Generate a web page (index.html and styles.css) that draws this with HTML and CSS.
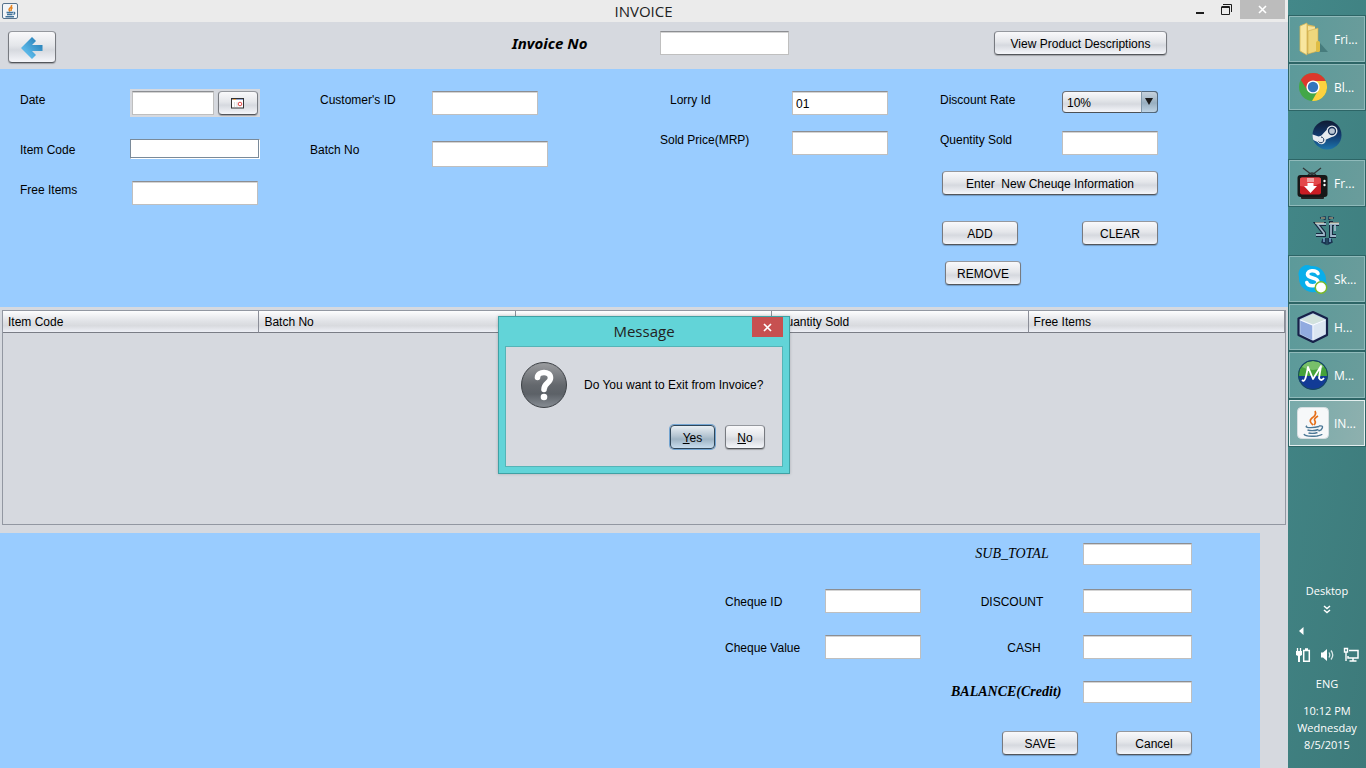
FILE: index.html
```html
<!DOCTYPE html>
<html lang="en">
<head>
  <meta charset="UTF-8">
  <meta name="viewport" content="width=device-width, initial-scale=1.0">
  <title>INVOICE</title>
  <link rel="stylesheet" href="styles.css">
</head>
<body>
  <main class="window">
    <header class="titlebar">
      <svg class="java-small" width="16" height="16" viewBox="0 0 16 16">
        <rect x="0.5" y="0.5" width="15" height="15" rx="1.5" fill="#f2f5f8" stroke="#56728c"/>
        <path d="M9.5 2Q10 4 7.8 5.2Q6.2 6.6 8 8.4M10.5 4.5Q8.5 6 9.2 8" fill="none" stroke="#e5821e" stroke-width="1.5"/>
        <path d="M4.5 9.5H11M5 11.5H10.5M3.5 13.7H12M11.5 9.3Q14 9.5 11.5 11.6" fill="none" stroke="#42739a" stroke-width="1.4"/>
      </svg>
      <h1>INVOICE</h1>
      <div class="window-buttons">
        <button class="win-btn" aria-label="Minimize">
          <svg width="10" height="12" viewBox="0 0 10 12"><path d="M0 9H8" stroke="#1d1d1d" stroke-width="2"/></svg>
        </button>
        <button class="win-btn" aria-label="Restore">
          <svg width="12" height="12" viewBox="0 0 12 12"><path d="M0.500 3V10.500H8.500V2.500H0.500M0 3.500H9M2 0.500H10.500V8" fill="none" stroke="#1d1d1d"/></svg>
        </button>
        <button class="win-btn win-close" aria-label="Close">
          <svg width="9" height="9" viewBox="0 0 9 9"><path d="M1 1L8 8M8 1L1 8" stroke="#fff" stroke-width="1.6"/></svg>
        </button>
      </div>
    </header>

    <section class="toolbar">
      <button class="btn back" aria-label="Back">
        <svg width="24" height="24" viewBox="0 0 24 24">
          <defs>
            <linearGradient id="arrow" x1="0" y1="1" x2="1" y2="0">
              <stop offset="0.3" stop-color="#58b5e6"/>
              <stop offset="1" stop-color="#1c74ad"/>
            </linearGradient>
          </defs>
          <path d="M1 12L12 1L16 5L12 9H22.5V15H12L16 19L12 23Z" fill="url(#arrow)"/>
        </svg>
      </button>
      <label class="invoice-label" for="invoiceNo">Invoice No</label>
      <input class="field invoice-no" type="text" id="invoiceNo">
      <button class="btn view">View Product Descriptions</button>
    </section>

    <form class="entry" onsubmit="return false">
      <div class="col">
        <div class="row tall">
          <label for="date">Date</label>
          <div class="date-picker">
            <input class="field" type="text" id="date">
            <button class="btn" type="button" aria-label="Pick a date">
              <svg width="14" height="11" viewBox="0 0 14 11">
                <rect x="0.5" y="0.5" width="12" height="9.5" fill="#fff" stroke="#333"/>
                <path d="M1 1.5H12" stroke="#94a5cf"/>
                <path d="M2 1.5H5" stroke="#eda34b"/>
                <path d="M3.5 4V9M6 4V9" stroke="#ddd"/>
                <circle cx="9" cy="6" r="1.8" fill="none" stroke="#e24848"/>
              </svg>
            </button>
          </div>
        </div>
        <div class="row">
          <label for="itemCode">Item Code</label>
          <input class="combo" type="text" id="itemCode">
        </div>
        <div class="row free-row">
          <label for="freeItems">Free Items</label>
          <input class="field free" type="text" id="freeItems">
        </div>
      </div>

      <div class="col">
        <div class="row tall">
          <label class="wide indent" for="customer">Customer's ID</label>
          <input class="field customer" type="text" id="customer">
        </div>
        <div class="row">
          <label class="wide" for="batch">Batch No</label>
          <input class="field batch" type="text" id="batch">
        </div>
      </div>

      <div class="col">
        <div class="row">
          <label class="wider indent" for="lorry">Lorry Id</label>
          <input class="field" type="text" id="lorry" value="01">
        </div>
        <div class="row">
          <label class="wider" for="price">Sold Price(MRP)</label>
          <input class="field" type="text" id="price">
        </div>
      </div>

      <div class="col">
        <div class="row">
          <label class="wide" for="rate">Discount Rate</label>
          <div class="select">
            <select id="rate"><option>10%</option></select>
          </div>
        </div>
        <div class="row">
          <label class="wide" for="quantity">Quentity Sold</label>
          <input class="field" type="text" id="quantity">
        </div>
        <div class="row tall actions">
          <button class="btn cheque" type="button">Enter&nbsp; New Cheuqe Information</button>
        </div>
        <div class="row actions">
          <button class="btn" type="button">ADD</button>
          <button class="btn" type="button">CLEAR</button>
        </div>
        <div class="row actions remove">
          <button class="btn" type="button">REMOVE</button>
        </div>
      </div>
    </form>

    <section class="items">
      <table>
        <thead>
          <tr>
            <th>Item Code</th>
            <th>Batch No</th>
            <th></th>
            <th>Quantity Sold</th>
            <th>Free Items</th>
          </tr>
        </thead>
      </table>
    </section>

    <form class="totals" onsubmit="return false">
      <div class="cheques">
        <label for="chequeId">Cheque ID</label>
        <input class="field" type="text" id="chequeId">
        <label for="chequeValue">Cheque Value</label>
        <input class="field" type="text" id="chequeValue">
      </div>
      <div class="sums">
        <label class="serif" for="subTotal">SUB_TOTAL</label>
        <input class="field short" type="text" id="subTotal">
        <label for="discount">DISCOUNT</label>
        <input class="field" type="text" id="discount">
        <label class="cash" for="cash">CASH</label>
        <input class="field" type="text" id="cash">
        <label class="serif balance" for="balance">BALANCE(Credit)</label>
        <input class="field short" type="text" id="balance">
        <div class="save-row">
          <button class="btn" type="button">SAVE</button>
          <button class="btn" type="button">Cancel</button>
        </div>
      </div>
    </form>

    <div class="dialog" role="dialog" aria-labelledby="dialogTitle">
      <h2 id="dialogTitle">Message</h2>
      <button class="dialog-close" aria-label="Close">
        <svg width="9" height="9" viewBox="0 0 9 9"><path d="M1 1L8 8M8 1L1 8" stroke="#fff" stroke-width="1.7"/></svg>
      </button>
      <div class="dialog-body">
        <div class="question">
          <svg width="46" height="46" viewBox="0 0 46 46">
            <defs>
              <linearGradient id="ball" x1="0" y1="0" x2="0" y2="1">
                <stop offset="0" stop-color="#9b9da0"/>
                <stop offset="0.5" stop-color="#64686d"/>
                <stop offset="0.7" stop-color="#5c6167"/>
                <stop offset="1" stop-color="#878d94"/>
              </linearGradient>
            </defs>
            <circle cx="23" cy="23" r="22.5" fill="url(#ball)" stroke="#3c4045"/>
            <path d="M16.5 15.5C16.5 9 29.5 8.500 29.500 16C29.500 21 23 21 23 27.500" fill="none" stroke="#fff" stroke-width="5.6" stroke-linecap="round"/>
            <circle cx="23" cy="35" r="3.3" fill="#fff"/>
          </svg>
          <p>Do You want to Exit from Invoice?</p>
        </div>
        <div class="answers">
          <button class="btn yes"><u>Y</u>es</button>
          <button class="btn no"><u>N</u>o</button>
        </div>
      </div>
    </div>
  </main>

  <aside class="taskbar">
    <nav class="tasks">
      <button class="task">
        <svg width="32" height="34" viewBox="0 0 32 34">
          <path d="M20 30L31 30L23 21Z" fill="#2c5d5f" opacity="0.5"/>
          <path d="M9 2L18 4V30L10 31Z" fill="#d9b95a"/>
          <path d="M11 4L18 5V29L11 30Z" fill="#f5e29a"/>
          <path d="M3 4L10 1V33L3 29Z" fill="#f8e69f" stroke="#d5b656" stroke-width="0.8"/>
          <path d="M11 9L21 6V29L11 32Z" fill="#efd77d" stroke="#cda94c" stroke-width="0.6"/>
          <rect x="19" y="19" width="4" height="11" rx="1.5" fill="#dfbd45"/>
        </svg>
        <span>Fri...</span>
      </button>
      <button class="task">
        <svg width="32" height="32" viewBox="0 0 32 32">
          <circle cx="16" cy="16" r="14" fill="#43a747"/>
          <path d="M16 16L3.900 9A14 14 0 0 1 28.600 10H16Z" fill="#dc382d"/>
          <path d="M16 10H28.700A14 14 0 0 1 15 30L21.300 19Z" fill="#fdd23f"/>
          <path d="M3.900 9L10.500 19.500L16 10Z" fill="#dc382d"/>
          <circle cx="16" cy="16" r="6.600" fill="#fff"/>
          <circle cx="16" cy="16" r="5.200" fill="#3475bd"/>
        </svg>
        <span>Bl...</span>
      </button>
      <button class="task bare" aria-label="Steam">
        <svg width="32" height="32" viewBox="0 0 32 32">
          <defs>
            <linearGradient id="steam" x1="0" y1="0" x2="0" y2="1">
              <stop offset="0" stop-color="#101b33"/>
              <stop offset="0.5" stop-color="#12396d"/>
              <stop offset="1" stop-color="#1c73ab"/>
            </linearGradient>
            <clipPath id="steamClip"><circle cx="16" cy="16" r="14.5"/></clipPath>
          </defs>
          <circle cx="16" cy="16" r="14.5" fill="url(#steam)"/>
          <g clip-path="url(#steamClip)">
            <path d="M0 15L9 18L15.5 11L23 17L14 21L11 25L0 20Z" fill="#e6ebf0"/>
            <circle cx="21" cy="12" r="5.5" fill="#e6ebf0"/>
            <circle cx="21" cy="12" r="3.5" fill="#b9c4d2" stroke="#173158" stroke-width="1.3"/>
            <circle cx="10.500" cy="21" r="4.300" fill="#e6ebf0"/>
            <path d="M7.500 22.500A2.900 2.900 0 1 0 10 18" fill="none" stroke="#173158"/>
          </g>
        </svg>
      </button>
      <button class="task">
        <svg width="32" height="34" viewBox="0 0 32 34">
          <path d="M6 2L15 9L24 2M11 9Q15 5 19 9" fill="none" stroke="#303536" stroke-width="1.3"/>
          <rect x="4" y="29" width="23" height="4" rx="1" fill="#222"/>
          <rect x="0.5" y="9" width="30" height="22" rx="3" fill="#171717"/>
          <rect x="3" y="11.5" width="21" height="17" rx="2" fill="#c91d24"/>
          <path d="M3 13Q3 11.5 5 11.5H22Q24 11.5 24 13V17Q14 22 3 20Z" fill="#e4484a"/>
          <path d="M10 13H17M10 15H17" stroke="#fff" stroke-width="1.2"/>
          <path d="M10.5 17H16.5V20H20L13.5 27L7 20H10.5Z" fill="#fff"/>
          <circle cx="27.5" cy="15" r="1.2" fill="#fff"/>
          <circle cx="27.5" cy="19" r="1.2" fill="#fff"/>
        </svg>
        <span>Fr...</span>
      </button>
      <button class="task bare" aria-label="StarCraft">
        <svg width="32" height="32" viewBox="0 0 32 32">
          <path d="M9 3L14 2V5M23 3L18 2V5M12 24L11 27L15 29V23M20 24L21 27L17 29V23" fill="#1b3552" stroke="#1b3552" stroke-width="1.5"/>
          <path d="M15 9H6L13 18V20H5M28 9H18M20 6V21H25" fill="none" stroke="#16283e" stroke-width="4"/>
          <path d="M15 9H6L13 18V20H5" fill="none" stroke="#9db6c8" stroke-width="1.8"/>
          <path d="M28 9H18M20 8V21H25M24 10V16" fill="none" stroke="#9db6c8" stroke-width="1.800"/>
          <path d="M4 8H13M19 8H28" stroke="#efe3bd"/>
          <path d="M10 3H14M18 3H22" stroke="#d8c58c"/>
          <path d="M13 23V27M19 23V27" stroke="#7fb0d6" stroke-width="1.400"/>
        </svg>
      </button>
      <button class="task">
        <svg width="32" height="32" viewBox="0 0 32 32">
          <path d="M10 2A9 9 0 0 0 2 14A14 14 0 0 0 18 29A8.500 8.500 0 0 0 29 18A14 14 0 0 0 14 3A8 8 0 0 0 10 2Z" fill="#08aeea"/>
          <path d="M21 10.500C19 6.500 10 7 10.500 11.500C11 16 21 14 21 19C21 24 11 24 9.800 19.500" fill="none" stroke="#fff" stroke-width="3.600" stroke-linecap="round"/>
          <circle cx="24" cy="24.500" r="5.700" fill="#fff" stroke="#78b829" stroke-width="1.500"/>
        </svg>
        <span>Sk...</span>
      </button>
      <button class="task">
        <svg width="32" height="32" viewBox="0 0 32 32">
          <path d="M16 1L30 7.500V24L16 31L1.500 24V7.500Z" fill="#b9cdea" stroke="#172149" stroke-width="2.200" stroke-linejoin="round"/>
          <path d="M16 3L28 8.500L16 13.500L4 8.500Z" fill="#d2e2dd"/>
          <path d="M3.500 9.500L15.500 14.500V29L3.500 23Z" fill="#91abe0"/>
          <path d="M16.500 14.500L28.500 9.500V23L16.500 29Z" fill="#dbe6f1"/>
          <path d="M3.500 9L16 14L28.500 9M16 14V29" fill="none" stroke="#f8fbff" stroke-width="1.200"/>
        </svg>
        <span>H...</span>
      </button>
      <button class="task">
        <svg width="32" height="32" viewBox="0 0 32 32">
          <circle cx="16" cy="16" r="15" fill="#123b96"/>
          <path d="M1 17A15 15 0 0 1 31 17Z" fill="#45a23a"/>
          <path d="M5 8A13 13 0 0 1 27 8Q16 14 5 8Z" fill="#9bd28a" opacity="0.6"/>
          <path d="M5 21C8 24 9 18 11 8L16 20L24 7L22 19Q24 23 27 19" fill="none" stroke="#fff" stroke-width="1.800" stroke-linejoin="round"/>
          <circle cx="16" cy="16" r="14.500" fill="none" stroke="#184c55"/>
        </svg>
        <span>M...</span>
      </button>
      <button class="task active">
        <svg width="32" height="32" viewBox="0 0 32 32">
          <rect x="0.5" y="0.5" width="31" height="31" rx="4" fill="#f6f8f9" stroke="#d7dfe2"/>
          <path d="M18 4Q20 8 15 11Q11 14 16 18M21 9Q16 12 18 14Q19 16 17 18" fill="none" stroke="#e66f19" stroke-width="1.7"/>
          <path d="M10 19Q8 20 11 20.500Q17 21 22 19.500M10.500 23Q16 24.500 21.500 22.500M11.500 26Q16 27 20.500 25.500M7 27Q8 30 20 29Q25 28 25 27M22 19Q28 18 24 23L21.500 24" fill="none" stroke="#4b7896" stroke-width="1.400"/>
        </svg>
        <span>IN...</span>
      </button>
    </nav>

    <div class="tray">
      <a class="desktop" href="#">Desktop</a>
      <svg class="chevrons" width="8" height="9" viewBox="0 0 8 9"><path d="M1 1L4 3.500L7 1M1 5L4 7.500L7 5" fill="none" stroke="#fff" stroke-width="1.500"/></svg>
      <svg class="more" width="6" height="8" viewBox="0 0 6 8"><path d="M5.500 0V8L1 4Z" fill="#fff"/></svg>
      <div class="status">
        <svg width="16" height="16" viewBox="0 0 16 16">
          <path d="M2.500 1V4M5.500 1V4" stroke="#fff" stroke-width="1.300"/>
          <path d="M1 4H7V8L5 9V15H3V9L1 8Z" fill="#fff"/>
          <path d="M8.700 3.500H14.300V14.300H8.700ZM10 2H13" fill="none" stroke="#fff" stroke-width="1.500"/>
        </svg>
        <svg width="16" height="16" viewBox="0 0 16 16">
          <path d="M2 5.500H4L8 2V14L4 10.500H2Z" fill="#fff"/>
          <path d="M10 5.500Q11.500 8 10 10.500M12 3.500Q15.500 8 12 12.500" fill="none" stroke="#d9e8e8" stroke-width="1.300"/>
        </svg>
        <svg width="16" height="16" viewBox="0 0 16 16">
          <path d="M6 3.500H15V11H5V9M10 11V14M6.500 14H13.500" fill="none" stroke="#fff" stroke-width="1.500"/>
          <path d="M1.500 1.500H4.500V5H1.500ZM3 5V14" fill="none" stroke="#fff" stroke-width="1.400"/>
        </svg>
      </div>
      <div class="language">ENG</div>
      <div class="clock">
        <div>10:12 PM</div>
        <div>Wednesday</div>
        <div>8/5/2015</div>
      </div>
    </div>
  </aside>
</body>
</html>
```
FILE: styles.css
```css
*,
*::before,
*::after {
  margin: 0;
  padding: 0;
  box-sizing: border-box;
}

body {
  min-height: 100vh;
  display: flex;
  background: #d6d9df;
  font-family: "Liberation Sans", Arial, sans-serif;
  font-size: 12px;
  color: #000;
}

button,
input,
select {
  font: inherit;
  color: inherit;
}

svg {
  display: block;
  flex: none;
}

/* window */
.window {
  flex: 1;
  min-width: 0;
  position: relative;
  display: flex;
  flex-direction: column;
}

.titlebar {
  height: 22px;
  padding: 0 3px 0 2px;
  display: grid;
  grid-template-columns: 1fr auto 1fr;
  background: #ebebeb;
}

.java-small {
  margin-top: 3px;
}

.titlebar h1,
.dialog h2 {
  font-family: "Open Sans", sans-serif;
  font-size: 15px;
  font-weight: normal;
  line-height: 22px;
  color: #222;
}

.window-buttons {
  display: flex;
  justify-content: flex-end;
  align-items: flex-start;
}

.win-btn {
  width: 26px;
  height: 19px;
  display: flex;
  align-items: center;
  justify-content: center;
  border: none;
  background: none;
}

.win-close {
  width: 45px;
  background: #bcbcbc;
}

/* shared controls */
.btn {
  height: 24px;
  padding-top: 1px;
  border: 1px solid #777a80;
  border-top-color: #95989e;
  border-bottom-color: #53565b;
  border-radius: 4px;
  background: linear-gradient(#f9f9fb, #e4e6ea 45%, #d6d9df 60%, #f5f6fa);
  box-shadow: 0 1px 1px rgba(0, 0, 0, 0.25);
}

.field {
  width: 96px;
  height: 24px;
  padding: 1px 3px 0;
  border: 1px solid #bfbfbf;
  border-top-color: #8c8e92;
  background: #fff;
  box-shadow: inset 0 1px 0 #d4d4d4;
}

.toolbar {
  height: 47px;
  padding: 9px 121px 0 8px;
  display: flex;
  align-items: flex-start;
}

.back {
  width: 48px;
  height: 32px;
  display: flex;
  align-items: center;
  justify-content: center;
}

.invoice-label {
  margin-left: auto;
  width: 148px;
  font-family: "Noto Sans", sans-serif;
  font-size: 15px;
  font-weight: bold;
  font-style: italic;
  line-height: 24px;
}

.invoice-no {
  width: 129px;
}

.view {
  width: 173px;
  margin-left: 205px;
}

/* entry form */
.entry {
  min-height: 238px;
  padding: 20px 0 0 20px;
  display: grid;
  grid-template-columns: 290fr 350fr 280fr 348fr;
  background: #99ccff;
}

.row {
  height: 40px;
  display: flex;
  align-items: flex-start;
}

.row.tall {
  height: 50px;
}

.row label {
  width: 110px;
  line-height: 22px;
}

.row .wide {
  width: 122px;
}

.row .wider {
  width: 132px;
}

.row .indent {
  padding-left: 10px;
}

.row > .field,
.row > .select,
.row > .btn {
  margin-top: 2px;
}

.date-picker {
  width: 130px;
  height: 28px;
  padding: 2px;
  display: flex;
  justify-content: space-between;
  background: #d6d9df;
}

.date-picker .field {
  width: 82px;
}

.date-picker .btn {
  width: 40px;
  display: flex;
  align-items: center;
  justify-content: center;
}

.combo {
  width: 130px;
  height: 20px;
  border: 1px solid #fff;
  border-top-color: #7a8a99;
  border-left-color: #7a8a99;
  background: #fff;
  box-shadow: inset -1px -1px 0 #7a8a99;
}

.free-row {
  gap: 2px;
}

.free {
  width: 126px;
}

.customer {
  width: 106px;
}

.batch {
  width: 116px;
  height: 26px;
}

.select {
  width: 96px;
  height: 22px;
  position: relative;
}

.select select {
  width: 100%;
  height: 100%;
  padding: 1px 0 0 4px;
  appearance: none;
  border: 1px solid #6d7076;
  border-bottom-color: #4c5055;
  border-radius: 4px;
  background: linear-gradient(#f9f9fb, #e0e3e7 45%, #d6d9df 60%, #f5f6fa);
}

.select::before {
  content: "";
  position: absolute;
  top: 0;
  right: 0;
  width: 17px;
  height: 22px;
  border: 1px solid #52687c;
  border-left-color: #8299ab;
  border-radius: 0 4px 4px 0;
  background: linear-gradient(#c6d2dd, #98afc0 55%, #bfd4e5);
  pointer-events: none;
}

.select::after {
  content: "";
  position: absolute;
  top: 7px;
  right: 5px;
  border: 4px solid transparent;
  border-top: 7px solid #1d1d1d;
  border-bottom: none;
  pointer-events: none;
}

.actions {
  width: 218px;
  padding-left: 2px;
  justify-content: space-between;
}

.actions .btn {
  width: 76px;
}

.actions .cheque {
  width: 216px;
}

.actions.remove {
  padding-left: 5px;
}

/* items table */
.items {
  height: 215px;
  margin: 3px 2px 8px;
  border: 1px solid #9297a1;
}

.items table {
  width: 100%;
  border-collapse: separate;
  border-spacing: 0;
  table-layout: fixed;
}

.items th {
  height: 22px;
  padding-left: 5px;
  border-right: 1px solid #8b8e98;
  border-bottom: 1px solid #7a7d86;
  background: linear-gradient(#fdfdfe, #e0e2e6 50%, #d8dade 70%, #eef0f6);
  font-weight: normal;
  text-align: left;
}

/* totals */
.totals {
  flex: 1;
  margin-right: 28px;
  padding: 10px 68px 0 0;
  display: flex;
  justify-content: flex-end;
  gap: 30px;
  background: #99ccff;
}

.cheques,
.sums {
  display: grid;
  grid-auto-rows: 46px;
  align-content: start;
}

.cheques {
  margin-top: 46px;
  grid-template-columns: 100px 96px;
}

.sums {
  grid-template-columns: 132px 109px;
}

.cheques label,
.sums label {
  line-height: 26px;
}

.sums label {
  padding-right: 10px;
  text-align: center;
}

.sums .field {
  width: 109px;
}

.sums .short {
  height: 22px;
}

.sums .serif {
  font-family: "Liberation Serif", "Times New Roman", serif;
  font-size: 14px;
  font-style: italic;
  line-height: 22px;
}

.sums .cash {
  padding-left: 24px;
}

.sums .balance {
  font-weight: bold;
  text-align: left;
}

.save-row {
  grid-column: 1 / 3;
  padding: 4px 0 0 51px;
  display: flex;
  justify-content: space-between;
}

.save-row .btn {
  width: 76px;
}

/* exit dialog */
.dialog {
  position: absolute;
  top: 316px;
  left: 50%;
  width: 292px;
  margin-left: -146px;
  padding: 0 6px 6px;
  border: 1px solid #3fa1a4;
  background: #62d4d8;
  box-shadow: 0 0 3px rgba(0, 0, 0, 0.2);
}

.dialog h2 {
  line-height: 29px;
  text-align: center;
}

.dialog-close {
  position: absolute;
  top: 0;
  right: 6px;
  width: 31px;
  height: 20px;
  display: flex;
  align-items: center;
  justify-content: center;
  border: none;
  background: #c75050;
}

.dialog-body {
  height: 121px;
  padding: 15px 17px 0 15px;
  border: 1px solid #55b4b7;
  background: #d6d9df;
}

.question {
  display: flex;
  align-items: center;
  gap: 17px;
  white-space: nowrap;
}

.answers {
  margin-top: 17px;
  display: flex;
  justify-content: flex-end;
  gap: 10px;
}

.yes {
  width: 45px;
  border-color: #2f4659;
  background: linear-gradient(#e8eef3, #b5c5d2 45%, #9fb4c4 60%, #c7dcee);
  box-shadow: 0 0 0 1px #73a4d1;
}

.no {
  width: 40px;
}

/* taskbar */
.taskbar {
  width: 78px;
  display: flex;
  flex-direction: column;
  justify-content: space-between;
  background: linear-gradient(100deg, #438889, #3d7a7a);
  font-family: "Open Sans", sans-serif;
  color: #fff;
}

.tasks {
  padding: 16px 1px 0;
  display: flex;
  flex-direction: column;
  gap: 2px;
}

.task {
  height: 46px;
  padding-left: 7px;
  display: flex;
  align-items: center;
  gap: 5px;
  border: 1px solid #8fbaba;
  outline: 1px solid #2d6566;
  background: linear-gradient(100deg, #5c9a9a, #6a9c9b);
  white-space: nowrap;
}

.task.bare {
  padding: 0;
  justify-content: center;
  border-color: transparent;
  outline: none;
  background: none;
}

.task.active {
  border-color: #e3eeee;
  background: linear-gradient(100deg, #78aaaa, #8eb0ae);
}

.tray {
  padding-bottom: 20px;
  display: flex;
  flex-direction: column;
  align-items: center;
  font-size: 11px;
  line-height: 17px;
}

.desktop {
  color: #fff;
  text-decoration: none;
}

.chevrons {
  margin-top: 6px;
}

.more {
  margin: 13px 0 0 10px;
  align-self: flex-start;
}

.status {
  width: 64px;
  margin: 12px 0;
  display: flex;
  justify-content: space-between;
}

.clock {
  margin-top: 10px;
  text-align: center;
}
```
